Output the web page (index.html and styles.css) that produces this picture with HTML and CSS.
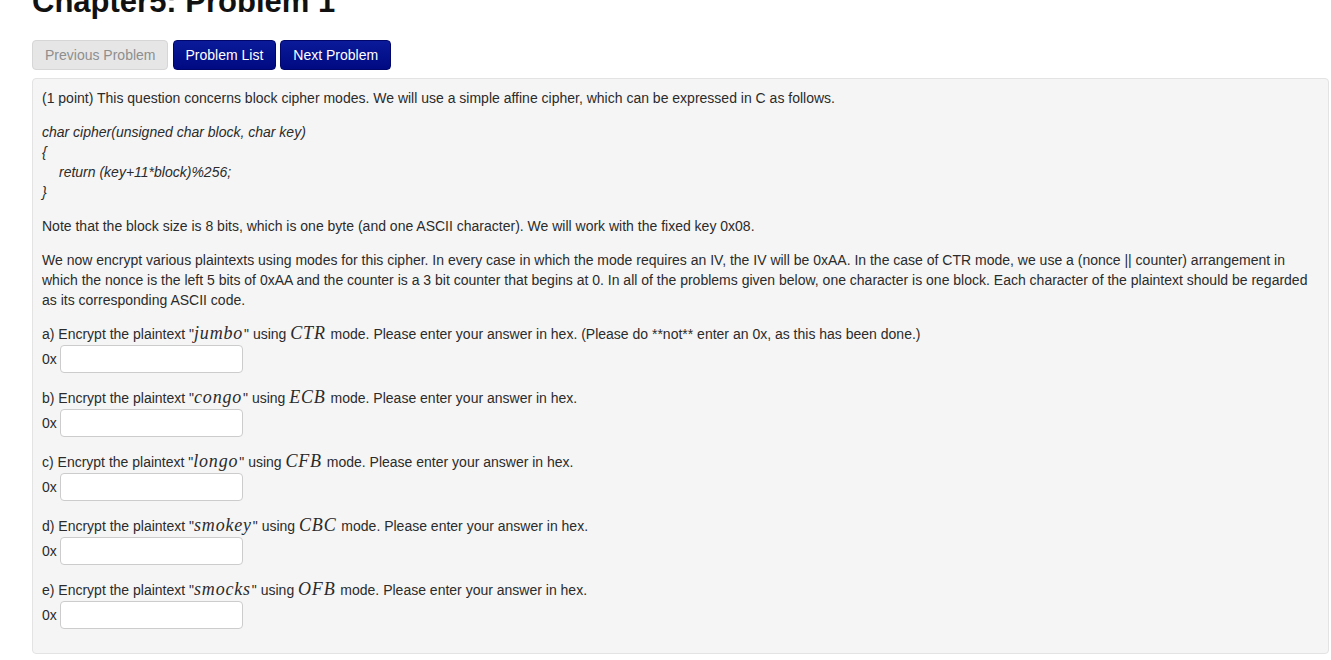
FILE: index.html
```html
<!DOCTYPE html>
<html>
<head>
<meta charset="utf-8">
<link rel="stylesheet" href="styles.css">
</head>
<body>
<div class="page">
  <h2 class="title">Chapter5: Problem 1</h2>
  <div class="nav">
    <span class="btn btn-disabled">Previous Problem</span>
    <span class="btn btn-primary">Problem List</span>
    <span class="btn btn-primary">Next Problem</span>
  </div>
  <div class="problem">
    <p>(1 point) This question concerns block cipher modes. We will use a simple affine cipher, which can be expressed in C as follows.</p>
    <div class="code">
      <div>char cipher(unsigned char block, char key)</div>
      <div>{</div>
      <div class="indent">return (key+11*block)%256;</div>
      <div>}</div>
    </div>
    <p>Note that the block size is 8 bits, which is one byte (and one ASCII character). We will work with the fixed key 0x08.</p>
    <p>We now encrypt various plaintexts using modes for this cipher. In every case in which the mode requires an IV, the IV will be 0xAA. In the case of CTR mode, we use a (nonce || counter) arrangement in which the nonce is the left 5 bits of 0xAA and the counter is a 3 bit counter that begins at 0. In all of the problems given below, one character is one block. Each character of the plaintext should be regarded as its corresponding ASCII code.</p>
    <div class="q">
      <div class="qline">a) Encrypt the plaintext "<span class="math">jumbo</span>" using <span class="math">CTR</span> mode. Please enter your answer in hex. (Please do **not** enter an 0x, as this has been done.)</div>
      <div class="ans"><span>0x</span><span class="input"></span></div>
    </div>
    <div class="q">
      <div class="qline">b) Encrypt the plaintext "<span class="math">congo</span>" using <span class="math">ECB</span> mode. Please enter your answer in hex.</div>
      <div class="ans"><span>0x</span><span class="input"></span></div>
    </div>
    <div class="q">
      <div class="qline">c) Encrypt the plaintext "<span class="math">longo</span>" using <span class="math">CFB</span> mode. Please enter your answer in hex.</div>
      <div class="ans"><span>0x</span><span class="input"></span></div>
    </div>
    <div class="q">
      <div class="qline">d) Encrypt the plaintext "<span class="math">smokey</span>" using <span class="math">CBC</span> mode. Please enter your answer in hex.</div>
      <div class="ans"><span>0x</span><span class="input"></span></div>
    </div>
    <div class="q">
      <div class="qline">e) Encrypt the plaintext "<span class="math">smocks</span>" using <span class="math">OFB</span> mode. Please enter your answer in hex.</div>
      <div class="ans"><span>0x</span><span class="input"></span></div>
    </div>
  </div>
</div>
</body>
</html>
```

FILE: styles.css
```css
html, body {
  margin: 0;
  padding: 0;
  background: #ffffff;
  overflow: hidden;
}
body {
  font-family: "Liberation Sans", Arial, sans-serif;
  color: #2b2b2b;
}
.page {
  padding-left: 32px;
  padding-right: 2px;
}
.title {
  font-size: 31px;
  line-height: 40px;
  font-weight: bold;
  color: #111;
  margin: -18px 0 18px 0;
}
.nav {
  display: flex;
  gap: 4px;
  height: 30px;
}
.btn {
  display: inline-flex;
  align-items: center;
  height: 30px;
  box-sizing: border-box;
  padding: 0 12px;
  font-size: 14px;
  border-radius: 4px;
  border: 1px solid;
}
.btn-disabled {
  padding: 0 11px 0 12px;
  margin-right: 1px;
  background: #e6e6e6;
  color: #8e8e8e;
  border-color: #d6d6d6;
}
.btn-primary {
  background: linear-gradient(#0a1a99, #000a82);
  color: #ffffff;
  border-color: #00066a;
}
.problem {
  margin-top: 8px;
  background: #f5f5f5;
  border: 1px solid #e3e3e3;
  border-radius: 4px;
  padding: 9px 9px 9px 9px;
  font-size: 14px;
  line-height: 20px;
}
.problem p {
  margin: 0 0 14px 0;
}
.code {
  font-style: italic;
  margin-bottom: 14px;
}
.code .indent {
  padding-left: 17px;
}
.q {
  margin-bottom: 14px;
}
.qline {
  height: 20px;
}
.math {
  font-family: "Liberation Serif", "Times New Roman", serif;
  font-style: italic;
  font-size: 18px;
  line-height: 14px;
  letter-spacing: 0.8px;
  margin-right: 1px;
}
.ans {
  display: flex;
  align-items: center;
  height: 30px;
  gap: 3px;
}
.input {
  display: block;
  width: 183px;
  height: 28px;
  box-sizing: border-box;
  background: #ffffff;
  border: 1px solid #cccccc;
  border-radius: 4px;
}
```
